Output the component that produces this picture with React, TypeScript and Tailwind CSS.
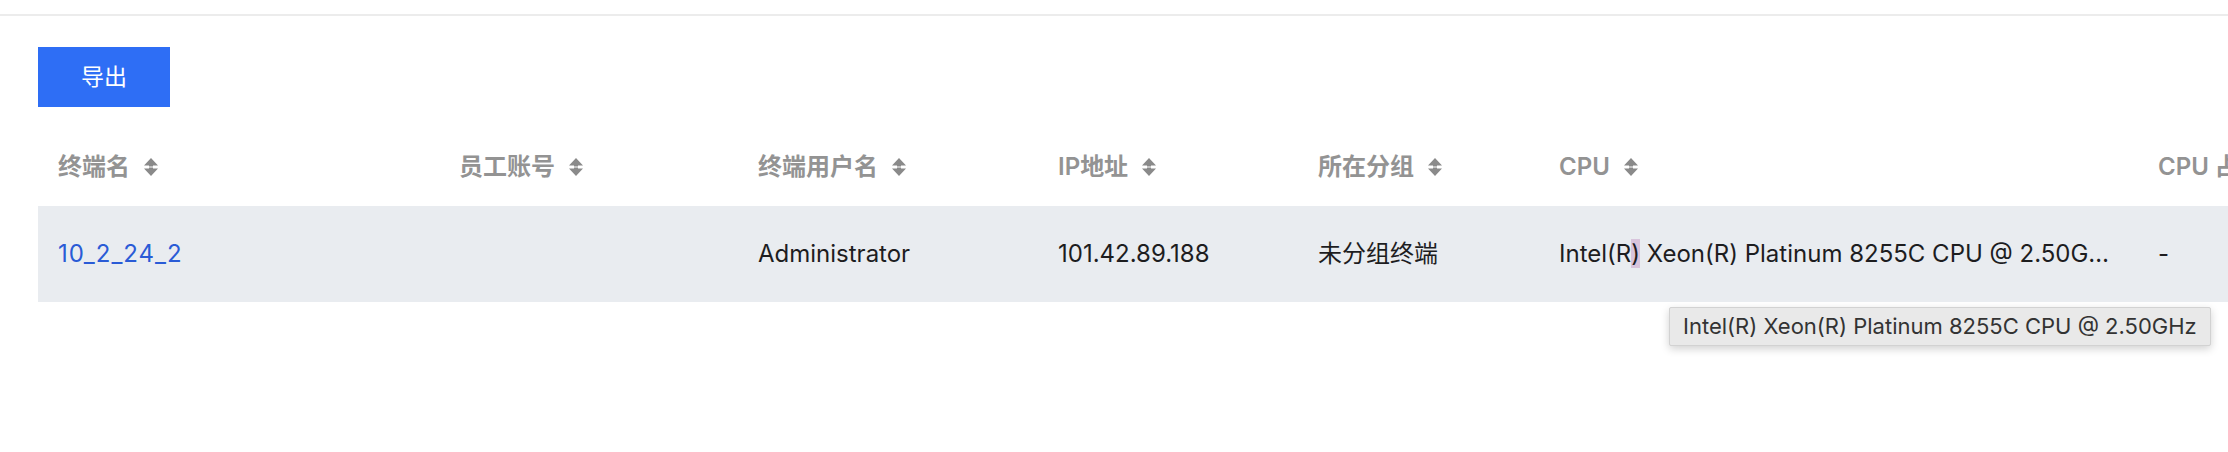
import React from "react"

const columns = [
  { title: "终端名", sortable: true },
  { title: "员工账号", sortable: true },
  { title: "终端用户名", sortable: true },
  { title: "IP地址", sortable: true },
  { title: "所在分组", sortable: true },
  { title: "CPU", sortable: true },
  { title: "CPU 占用率", sortable: true },
]

const cpuName = "Intel(R) Xeon(R) Platinum 8255C CPU @ 2.50GHz"

function SortIcon() {
  return (
    <svg width="14" height="18" viewBox="0 0 14 18" className="shrink-0 text-[#8a8a8a]">
      <path d="M7 0 L14 7.5 L9 7.5 L9 8.5 L5 8.5 L5 7.5 L0 7.5 Z" fill="currentColor" />
      <path d="M7 18 L14 10.5 L9 10.5 L9 9.5 L5 9.5 L5 10.5 L0 10.5 Z" fill="currentColor" />
    </svg>
  )
}

export default function App() {
  return (
    <div
      className="relative w-[2228px] h-[452px] overflow-hidden bg-white"
      style={{ fontFamily: "Inter, 'Noto Sans CJK SC', sans-serif" }}
    >
      {/* top bar edge */}
      <div className="h-[16px] border-b-2 border-[#ececec]" />

      <div className="pl-[38px]">
        <button className="mt-[31px] w-[132px] h-[60px] bg-[#2e6ef5] text-white text-[23px] flex items-center justify-center">
          导出
        </button>

        {/* table */}
        <div className="mt-[21px] grid grid-cols-[401px_299px_300px_260px_241px_599px_400px] w-max">
          {columns.map((col) => (
            <div key={col.title} className="h-[78px] pl-[20px] flex items-center gap-[14px] text-[24px] font-semibold text-[#939393] whitespace-nowrap">
              <span>{col.title}</span>
              {col.sortable && <SortIcon />}
            </div>
          ))}

          <div className="h-[96px] pl-[20px] flex items-center bg-[#e9ecf0] text-[24px] tracking-[1px] text-[#2a5bd6]">10_2_24_2</div>
          <div className="h-[96px] bg-[#e9ecf0]" />
          <div className="h-[96px] pl-[20px] flex items-center bg-[#e9ecf0] text-[24px] text-[#1d1d1f]">Administrator</div>
          <div className="h-[96px] pl-[20px] flex items-center bg-[#e9ecf0] text-[24px] text-[#1d1d1f]">101.42.89.188</div>
          <div className="h-[96px] pl-[20px] flex items-center bg-[#e9ecf0] text-[24px] text-[#1d1d1f]">未分组终端</div>
          <div className="h-[96px] pl-[20px] pr-[20px] flex items-center bg-[#e9ecf0] text-[24px] text-[#1d1d1f] min-w-0">
            <span className="truncate">
              Intel(R<span className="bg-[#d8c4dc]">)</span> Xeon(R) Platinum 8255C CPU @ 2.50GHz
            </span>
          </div>
          <div className="h-[96px] pl-[20px] flex items-center bg-[#e9ecf0] text-[24px] text-[#1d1d1f]">-</div>
        </div>
      </div>

      {/* tooltip */}
      <div className="absolute left-[1669px] top-[307px] h-[39px] px-[13px] flex items-center bg-[#e9e9e9] border border-[#d2d2d2] rounded-[2px] shadow-[0_3px_8px_rgba(0,0,0,0.18)] text-[22px] text-[#333] whitespace-nowrap">
        {cpuName}
      </div>
    </div>
  )
}
